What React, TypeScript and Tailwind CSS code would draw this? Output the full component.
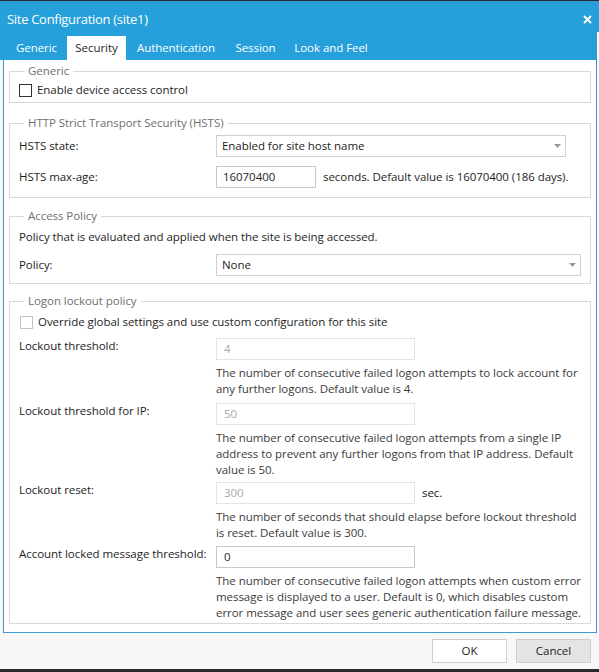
import React from "react";

const Arrow = () => (
  <svg width="7" height="4" viewBox="0 0 7 4">
    <path d="M0 0H7L3.5 4Z" fill="#9a9a9a" />
  </svg>
);

const Check = ({ light }: { light?: boolean }) => (
  <div
    className={
      light
        ? "w-[13px] h-[13px] border border-[#c4c4c4] bg-white shrink-0 ml-[1px]"
        : "w-[13px] h-[13px] border border-[#333333] bg-white shrink-0"
    }
  />
);

const Legend = ({ children }: { children: React.ReactNode }) => (
  <legend className="ml-[5px] px-[4px] text-[#6f6f6f] leading-[16px]">{children}</legend>
);

const tabs = [
  { name: "Generic", w: "w-[61px]" },
  { name: "Security", w: "w-[59px]", active: true },
  { name: "Authentication", w: "w-[100px]" },
  { name: "Session", w: "w-[59px]" },
  { name: "Look and Feel", w: "w-[92px]" },
];

export default function App() {
  return (
    <div className="w-[599px] h-[672px] bg-[#f7f7f7] flex flex-col overflow-hidden font-['Open_Sans',sans-serif] text-[11.5px] tracking-[-0.05px] leading-[16px] text-[#1e1e1e]">
      <div className="h-px bg-[#2b2b2b] shrink-0" />
      <div className="h-[31px] bg-[#26a0da] flex items-center justify-between pt-[5px] pl-[7px] pr-[7px] text-white shrink-0">
        <span className="text-[13px] tracking-[-0.3px] leading-[20px]">Site Configuration (site1)</span>
        <svg width="9" height="9" viewBox="0 0 9 9">
          <path d="M1 1L8 8M8 1L1 8" stroke="#ffffff" strokeWidth="1.8" />
        </svg>
      </div>
      <div className="flex flex-1 min-h-0">
        <div className="w-[597px] flex flex-col">
          <div className="h-[4px] bg-[#26a0da] shrink-0" />
          <div className="h-[24px] bg-[#26a0da] flex pl-[6px] shrink-0">
            {tabs.map((t) => (
              <div
                key={t.name}
                className={
                  (t.active ? "bg-white text-[#1e1e1e] " : "text-white ") +
                  t.w +
                  " h-[24px] flex items-center justify-center whitespace-nowrap"
                }
              >
                {t.name}
              </div>
            ))}
          </div>
          <div className="ml-[3px] w-[594px] border-l border-r border-b border-[#3d9ad4] bg-white flex flex-col pb-[8px]">
            {/* Generic */}
            <fieldset className="mx-[5px] mt-[3px] border border-[#d9d9d9] px-[9px] pb-[2px]">
              <Legend>Generic</Legend>
              <div className="h-[20px] mt-[1px] flex items-center gap-[5px]">
                <Check />
                <span>Enable device access control</span>
              </div>
            </fieldset>

            {/* HSTS */}
            <fieldset className="mx-[5px] mt-[12px] border border-[#d9d9d9] px-[9px] pb-[9px]">
              <Legend>HTTP Strict Transport Security (HSTS)</Legend>
              <div className="flex items-center mt-[4px]">
                <div className="w-[197px] shrink-0">HSTS state:</div>
                <div className="w-[350px] h-[22px] border border-[#d0d0d0] bg-white flex items-center justify-between pl-[5px] pr-[4px]">
                  <span>Enabled for site host name</span>
                  <Arrow />
                </div>
              </div>
              <div className="flex items-center mt-[9px]">
                <div className="w-[197px] shrink-0">HSTS max-age:</div>
                <div className="w-[100px] h-[22px] border border-[#c8c8c8] bg-white flex items-center pl-[6px]">16070400</div>
                <span className="ml-[7px] whitespace-nowrap">seconds. Default value is 16070400 (186 days).</span>
              </div>
            </fieldset>

            {/* Access Policy */}
            <fieldset className="mx-[5px] mt-[10px] border border-[#d9d9d9] px-[9px] pb-[7px]">
              <Legend>Access Policy</Legend>
              <div className="mt-[5px]">Policy that is evaluated and applied when the site is being accessed.</div>
              <div className="flex items-center mt-[9px]">
                <div className="w-[197px] shrink-0">Policy:</div>
                <div className="w-[365px] h-[22px] border border-[#d0d0d0] bg-white flex items-center justify-between pl-[5px] pr-[4px]">
                  <span>None</span>
                  <Arrow />
                </div>
              </div>
            </fieldset>

            {/* Logon lockout policy */}
            <fieldset className="mx-[5px] mt-[9px] border border-[#d9d9d9] px-[9px] pb-[2px]">
              <Legend>Logon lockout policy</Legend>
              <div className="h-[20px] mt-[3px] flex items-center gap-[5px]">
                <Check light />
                <span>Override global settings and use custom configuration for this site</span>
              </div>

              <div className="flex items-start mt-[6px]">
                <div className="w-[197px] shrink-0 whitespace-nowrap">Lockout threshold:</div>
                <div className="flex flex-col">
                  <div className="w-[199px] h-[22px] border border-[#e4e4e4] bg-white flex items-center pl-[7px] text-[#a8a8a8]">4</div>
                  <div className="mt-[5px] text-[#3a3a3a] whitespace-nowrap">
                    The number of consecutive failed logon attempts to lock account for
                    <br />
                    any further logons. Default value is 4.
                  </div>
                </div>
              </div>

              <div className="flex items-start mt-[6px]">
                <div className="w-[197px] shrink-0 whitespace-nowrap">Lockout threshold for IP:</div>
                <div className="flex flex-col">
                  <div className="w-[199px] h-[22px] border border-[#e4e4e4] bg-white flex items-center pl-[7px] text-[#a8a8a8]">50</div>
                  <div className="mt-[5px] text-[#3a3a3a] whitespace-nowrap">
                    The number of consecutive failed logon attempts from a single IP
                    <br />
                    address to prevent any further logons from that IP address. Default
                    <br />
                    value is 50.
                  </div>
                </div>
              </div>

              <div className="flex items-start mt-[4px]">
                <div className="w-[197px] shrink-0 whitespace-nowrap">Lockout reset:</div>
                <div className="flex flex-col">
                  <div className="flex items-center">
                    <div className="w-[199px] h-[22px] border border-[#e4e4e4] bg-white flex items-center pl-[7px] text-[#a8a8a8]">300</div>
                    <span className="ml-[7px] text-[#111111]">sec.</span>
                  </div>
                  <div className="mt-[5px] text-[#3a3a3a] whitespace-nowrap">
                    The number of seconds that should elapse before lockout threshold
                    <br />
                    is reset. Default value is 300.
                  </div>
                </div>
              </div>

              <div className="flex items-start mt-[5px]">
                <div className="w-[197px] shrink-0 whitespace-nowrap">Account locked message threshold:</div>
                <div className="flex flex-col">
                  <div className="w-[199px] h-[22px] border border-[#c8c8c8] bg-white flex items-center pl-[7px]">0</div>
                  <div className="mt-[5px] text-[#3a3a3a] whitespace-nowrap">
                    The number of consecutive failed logon attempts when custom error
                    <br />
                    message is displayed to a user. Default is 0, which disables custom
                    <br />
                    error message and user sees generic authentication failure message.
                  </div>
                </div>
              </div>
            </fieldset>
          </div>
          <div className="flex-1 flex justify-end items-start gap-[9px] pt-[6px] pr-[6px]">
            <div className="w-[75px] h-[24px] border border-[#cfcfcf] bg-white flex items-center justify-center">OK</div>
            <div className="w-[75px] h-[24px] border border-[#cfcfcf] bg-[#e4e4e4] flex items-center justify-center">Cancel</div>
          </div>
        </div>
        <div className="w-[2px] bg-[#f7f7f7]" />
      </div>
      <div className="h-[3px] bg-[#2b2b2b] shrink-0" />
    </div>
  );
}
